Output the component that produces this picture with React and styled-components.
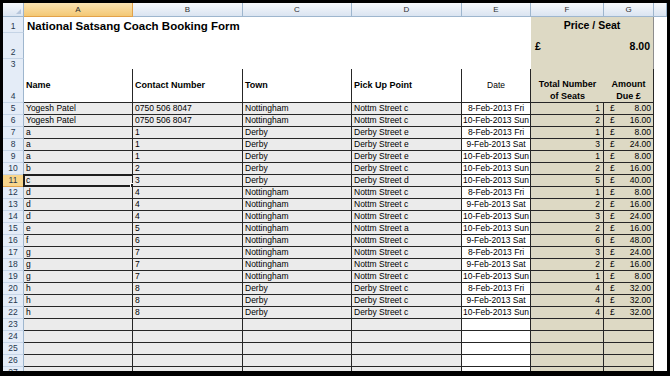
import React from "react";
import styled, { createGlobalStyle } from "styled-components";

// column template: row header, A..G, then the empty H strip
const COLS = "21px 109px 110px 109px 110px 69px 73px 50px 13px";
const LINE = "#262626";
const TAN = "#ddd9c4";
const GREY = "#ebebeb";

const GlobalStyle = createGlobalStyle`
  html, body {
    margin: 0;
    padding: 0;
    background: #000;
  }
  body {
    font-family: "Liberation Sans", Arial, sans-serif;
    color: #000;
  }
`;

const Frame = styled.div`
  width: 670px;
  height: 376px;
  padding: 3px 3px 5px 3px;
  box-sizing: border-box;
  background: #000;
`;

const Sheet = styled.div`
  width: 664px;
  height: 368px;
  overflow: hidden;
  background: #fff;
`;

const Row = styled.div`
  display: grid;
  grid-template-columns: ${COLS};
  height: ${(p) => p.$h}px;
`;

const ColHead = styled.div`
  box-sizing: border-box;
  display: flex;
  align-items: center;
  justify-content: center;
  font-size: 8px;
  color: #2c2c2c;
  border-right: 1px solid ${(p) => (p.$active ? "#e2a24a" : "#9eb6ce")};
  border-bottom: 1px solid ${(p) => (p.$active ? "#e2a24a" : "#9eb6ce")};
  background: ${(p) =>
    p.$active
      ? "linear-gradient(to bottom, #fbe3b1, #f4c874)"
      : "linear-gradient(to bottom, #f7f9fc, #dae4f1)"};
`;

const Corner = styled(ColHead)`
  position: relative;
  &::after {
    content: "";
    position: absolute;
    right: 2px;
    bottom: 2px;
    border-left: 5px solid transparent;
    border-bottom: 5px solid #b6c6dc;
  }
`;

const RowHead = styled.div`
  box-sizing: border-box;
  display: flex;
  align-items: flex-end;
  justify-content: center;
  padding-bottom: 1px;
  font-size: 8.5px;
  line-height: 10px;
  color: #26384f;
  border-right: 1px solid ${(p) => (p.$active ? "#e2a24a" : "#9eb6ce")};
  border-bottom: 1px solid ${(p) => (p.$active ? "#e2a24a" : "#c5d4e6")};
  background: ${(p) => (p.$active ? "#f8d58b" : "#e4ecf7")};
`;

const Cell = styled.div`
  position: relative;
  box-sizing: border-box;
  display: flex;
  align-items: ${(p) => p.$v || "flex-end"};
  justify-content: ${(p) => p.$h || "flex-start"};
  padding: 0 ${(p) => (p.$pr != null ? p.$pr : 2)}px 0 ${(p) => (p.$pl != null ? p.$pl : 2)}px;
  background: ${(p) => p.$bg || "#fff"};
  border-right: ${(p) => (p.$r ? `1px solid ${p.$r}` : "none")};
  border-bottom: ${(p) => (p.$b ? `${p.$bw || 1}px solid ${p.$b}` : "none")};
  font-size: ${(p) => p.$size || 8.5}px;
  font-weight: ${(p) => (p.$bold ? 700 : 400)};
  line-height: 11px;
  white-space: nowrap;
  text-align: ${(p) => p.$ta || "left"};
`;

const Span = styled(Cell)`
  grid-column: span ${(p) => p.$span};
`;

const Title = styled.span`
  font-size: 11.5px;
  font-weight: 700;
  line-height: 14px;
`;

const Stack = styled.div`
  display: flex;
  flex-direction: column;
  align-items: center;
  line-height: 12px;
  padding-bottom: 0;
`;

const Selection = styled.div`
  position: absolute;
  left: -1px;
  top: -1px;
  right: -2px;
  bottom: -1px;
  border: 2px solid #1e1e1e;
  pointer-events: none;
  &::after {
    content: "";
    position: absolute;
    right: -4px;
    bottom: -4px;
    width: 4px;
    height: 4px;
    background: #1e1e1e;
    border: 1px solid #fff;
  }
`;

const rows = [
  ["Yogesh Patel", "0750 506 8047", "Nottingham", "Nottm Street c", "8-Feb-2013 Fri", 1, "8.00"],
  ["Yogesh Patel", "0750 506 8047", "Nottingham", "Nottm Street c", "10-Feb-2013 Sun", 2, "16.00"],
  ["a", "1", "Derby", "Derby Street e", "8-Feb-2013 Fri", 1, "8.00"],
  ["a", "1", "Derby", "Derby Street e", "9-Feb-2013 Sat", 3, "24.00"],
  ["a", "1", "Derby", "Derby Street e", "10-Feb-2013 Sun", 1, "8.00"],
  ["b", "2", "Derby", "Derby Street c", "10-Feb-2013 Sun", 2, "16.00"],
  ["c", "3", "Derby", "Derby Street d", "10-Feb-2013 Sun", 5, "40.00"],
  ["d", "4", "Nottingham", "Nottm Street c", "8-Feb-2013 Fri", 1, "8.00"],
  ["d", "4", "Nottingham", "Nottm Street c", "9-Feb-2013 Sat", 2, "16.00"],
  ["d", "4", "Nottingham", "Nottm Street c", "10-Feb-2013 Sun", 3, "24.00"],
  ["e", "5", "Nottingham", "Nottm Street a", "10-Feb-2013 Sun", 2, "16.00"],
  ["f", "6", "Nottingham", "Nottm Street c", "9-Feb-2013 Sat", 6, "48.00"],
  ["g", "7", "Nottingham", "Nottm Street c", "8-Feb-2013 Fri", 3, "24.00"],
  ["g", "7", "Nottingham", "Nottm Street c", "9-Feb-2013 Sat", 2, "16.00"],
  ["g", "7", "Nottingham", "Nottm Street c", "10-Feb-2013 Sun", 1, "8.00"],
  ["h", "8", "Derby", "Derby Street c", "8-Feb-2013 Fri", 4, "32.00"],
  ["h", "8", "Derby", "Derby Street c", "9-Feb-2013 Sat", 4, "32.00"],
  ["h", "8", "Derby", "Derby Street c", "10-Feb-2013 Sun", 4, "32.00"],
];

const blanks = [23, 24, 25, 26, 27];

const DataRow = ({ n, data, selected }) => {
  const [name, contact, town, pick, date, seats, amount] = data || [];
  return (
    <Row $h={12}>
      <RowHead $active={selected}>{n}</RowHead>
      <Cell $bg={GREY} $r={LINE} $b={LINE}>
        {name}
        {selected && <Selection />}
      </Cell>
      <Cell $bg={GREY} $r={LINE} $b={LINE}>{contact}</Cell>
      <Cell $bg={GREY} $r={LINE} $b={LINE}>{town}</Cell>
      <Cell $bg={GREY} $r={LINE} $b={LINE}>{pick}</Cell>
      <Cell $r={LINE} $b={LINE} $h="center">{date}</Cell>
      <Cell $bg={TAN} $r={LINE} $b={LINE} $h="flex-end" $pr={3}>{seats}</Cell>
      <Cell $bg={TAN} $r={LINE} $b={LINE} $h="space-between" $pl={6} $pr={2}>
        {data && (
          <>
            <span>£</span>
            <span>{amount}</span>
          </>
        )}
      </Cell>
      <Cell />
    </Row>
  );
};

const App = () => (
  <>
    <GlobalStyle />
    <Frame>
      <Sheet>
        <Row $h={14}>
          <Corner />
          <ColHead $active>A</ColHead>
          <ColHead>B</ColHead>
          <ColHead>C</ColHead>
          <ColHead>D</ColHead>
          <ColHead>E</ColHead>
          <ColHead>F</ColHead>
          <ColHead>G</ColHead>
          <ColHead />
        </Row>

        <Row $h={16}>
          <RowHead>1</RowHead>
          <Span $span={5} $pl={3}>
            <Title>National Satsang Coach Booking Form</Title>
          </Span>
          <Span $span={2} $bg={TAN} $r="#8c8c8c" $h="center" $v="center" $size={10.5} $bold>
            Price / Seat
          </Span>
          <Cell />
        </Row>

        <Row $h={26}>
          <RowHead>2</RowHead>
          <Span $span={5} />
          <Cell $bg={TAN} $v="center" $size={10.5} $bold $pl={4}>£</Cell>
          <Cell $bg={TAN} $r="#8c8c8c" $v="center" $h="flex-end" $size={10.5} $bold $pr={3}>
            8.00
          </Cell>
          <Cell />
        </Row>

        <Row $h={10}>
          <RowHead>3</RowHead>
          <Span $span={5} $b={LINE} $bw={2} />
          <Cell $bg={TAN} $b={LINE} $bw={2} />
          <Cell $bg={TAN} $r="#8c8c8c" $b={LINE} $bw={2} />
          <Cell />
        </Row>

        <Row $h={34}>
          <RowHead>4</RowHead>
          <Cell $r={LINE} $b={LINE} $v="center" $size={9} $bold>Name</Cell>
          <Cell $r={LINE} $b={LINE} $v="center" $size={9} $bold>Contact Number</Cell>
          <Cell $r={LINE} $b={LINE} $v="center" $size={9} $bold>Town</Cell>
          <Cell $r={LINE} $b={LINE} $v="center" $size={9} $bold>Pick Up Point</Cell>
          <Cell $r={LINE} $b={LINE} $v="center" $h="center">Date</Cell>
          <Cell $bg={TAN} $b={LINE} $h="center" $size={9} $bold>
            <Stack>
              <span>Total Number</span>
              <span>of Seats</span>
            </Stack>
          </Cell>
          <Cell $bg={TAN} $r={LINE} $b={LINE} $h="center" $size={9} $bold>
            <Stack>
              <span>Amount</span>
              <span>Due £</span>
            </Stack>
          </Cell>
          <Cell />
        </Row>

        {rows.map((r, i) => (
          <DataRow key={i} n={i + 5} data={r} selected={i + 5 === 11} />
        ))}
        {blanks.map((n) => (
          <DataRow key={n} n={n} />
        ))}
      </Sheet>
    </Frame>
  </>
);

export default App;
